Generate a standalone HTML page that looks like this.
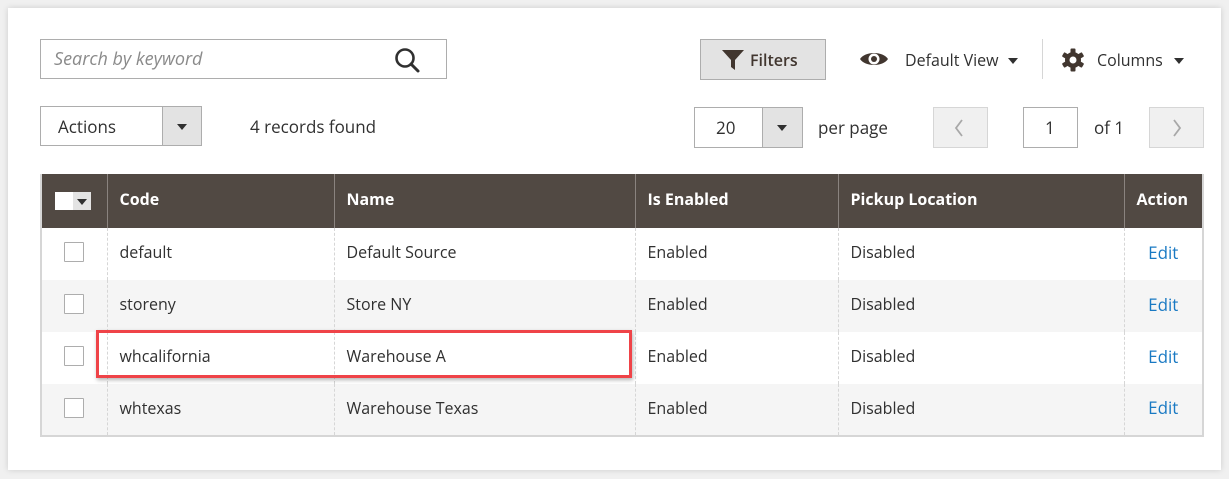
<!DOCTYPE html>
<html><head><meta charset="utf-8"><style>
*{box-sizing:border-box;margin:0;padding:0}
body{width:1229px;height:479px;background:#f0f0f0;font-family:"Open Sans","Liberation Sans",sans-serif;color:#303030;position:relative;overflow:hidden}
.card{position:absolute;left:8px;top:8px;width:1213px;height:462px;background:#fff;box-shadow:0 0 6px rgba(0,0,0,.15)}
.a{position:absolute}
.t{font-size:17px;line-height:20px}
.box{position:absolute;border:1px solid #adadad;background:#fff}
.tri{width:0;height:0;border-left:5px solid transparent;border-right:5px solid transparent;border-top:6px solid #303030;position:absolute}
table{position:absolute;left:40px;top:174px;width:1164px;border-collapse:collapse;border:2px solid #d6d6d6;border-top:none;font-size:16px}
th{background:#514943;color:#fff;text-align:left;font-weight:bold;height:54px;padding:0 12px 4px;border-left:1px solid #8a837f}
th:first-child{border-left:none}
td{height:52px;padding:0 12px 4px;border-left:1px dashed #d6d6d6;vertical-align:middle}
td:first-child{border-left:none}
tr.g td{background:#f5f5f5}
.cb{width:20px;height:20px;border:1px solid #adadad;background:#fff;margin-left:10px;border-radius:1px}
a{color:#1979c3;text-decoration:none;font-size:17px}
</style></head><body>
<div class="card"></div>
<div class="box" style="left:40px;top:39px;width:407px;height:40px"></div>
<div class="a t" style="left:54px;top:49px;font-style:italic;color:#8a8a8a;font-size:18px">Search by keyword</div>
<svg class="a" style="left:393px;top:46px" width="28" height="28" viewBox="0 0 28 28"><circle cx="12" cy="12" r="8.5" fill="none" stroke="#303030" stroke-width="2.6"/><line x1="18" y1="18" x2="25" y2="25" stroke="#303030" stroke-width="3" stroke-linecap="round"/></svg>

<div class="box" style="left:40px;top:106px;width:162px;height:40px"></div>
<div class="a" style="left:162px;top:107px;width:39px;height:38px;background:#e3e3e3;border-left:1px solid #adadad"></div>
<div class="tri" style="left:177px;top:124px"></div>
<div class="a t" style="left:58px;top:117px">Actions</div>
<div class="a t" style="left:250px;top:117px">4 records found</div>

<div class="a" style="left:700px;top:39px;width:126px;height:41px;background:#e3e3e3;border:1px solid #adadad"></div>
<svg class="a" style="left:721px;top:49px" width="24" height="22" viewBox="0 0 24 22"><path d="M1 1H23L14 11V21L10 18V11Z" fill="#41362f"/></svg>
<div class="a t" style="left:750px;top:50px;font-weight:600;color:#41362f;font-size:16px">Filters</div>
<svg class="a" style="left:859px;top:49px" width="30" height="20" viewBox="0 0 30 20"><path d="M1 10C6 2 24 2 29 10C24 18 6 18 1 10Z" fill="#41362f"/><circle cx="15" cy="10" r="5.5" fill="#fff"/><circle cx="15" cy="10" r="3" fill="#41362f"/></svg>
<div class="a t" style="left:905px;top:50px;font-size:16px">Default View</div>
<div class="tri" style="left:1008px;top:58px"></div>
<div class="a" style="left:1042px;top:39px;width:1px;height:40px;background:#d6d6d6"></div>
<svg class="a" style="left:1061px;top:48px" width="24" height="24" viewBox="0 0 24 24"><g fill="#41362f"><circle cx="12" cy="12" r="8"/><rect x="9.5" y="0.5" width="5" height="23" rx="1"/><rect x="9.5" y="0.5" width="5" height="23" rx="1" transform="rotate(60 12 12)"/><rect x="9.5" y="0.5" width="5" height="23" rx="1" transform="rotate(120 12 12)"/></g><circle cx="12" cy="12" r="3.5" fill="#fff"/></svg>
<div class="a t" style="left:1097px;top:50px;font-size:16px">Columns</div>
<div class="tri" style="left:1174px;top:58px"></div>

<div class="box" style="left:694px;top:107px;width:109px;height:41px"></div>
<div class="a" style="left:762px;top:108px;width:40px;height:39px;background:#e3e3e3;border-left:1px solid #adadad"></div>
<div class="tri" style="left:777px;top:125px"></div>
<div class="a t" style="left:716px;top:118px">20</div>
<div class="a t" style="left:818px;top:118px">per page</div>
<div class="a" style="left:933px;top:107px;width:55px;height:41px;background:#f0f0f0;border:1px solid #d6d6d6"></div>
<svg class="a" style="left:953px;top:118px" width="12" height="20" viewBox="0 0 12 20"><path d="M9 2L3 10L9 18" fill="none" stroke="#a8a8a8" stroke-width="1.8"/></svg>
<div class="box" style="left:1023px;top:107px;width:55px;height:41px"></div>
<div class="a t" style="left:1045px;top:118px">1</div>
<div class="a t" style="left:1094px;top:118px">of 1</div>
<div class="a" style="left:1149px;top:107px;width:55px;height:41px;background:#f0f0f0;border:1px solid #d6d6d6"></div>
<svg class="a" style="left:1171px;top:118px" width="12" height="20" viewBox="0 0 12 20"><path d="M3 2L9 10L3 18" fill="none" stroke="#a8a8a8" stroke-width="1.8"/></svg>

<table>
<tr><th style="width:66px;padding:0 13px"><div style="display:flex"><div style="width:18px;height:18px;background:#fff"></div><div style="width:18px;height:18px;background:#e3e3e3;position:relative"><div class="tri" style="left:4px;top:7px"></div></div></div></th><th style="width:227px">Code</th><th style="width:301px">Name</th><th style="width:203px">Is Enabled</th><th style="width:286px">Pickup Location</th><th>Action</th></tr>
<tr><td><div class="cb"></div></td><td>default</td><td>Default Source</td><td>Enabled</td><td>Disabled</td><td style="text-align:center"><a>Edit</a></td></tr>
<tr class="g"><td><div class="cb"></div></td><td>storeny</td><td>Store NY</td><td>Enabled</td><td>Disabled</td><td style="text-align:center"><a>Edit</a></td></tr>
<tr><td><div class="cb"></div></td><td>whcalifornia</td><td>Warehouse A</td><td>Enabled</td><td>Disabled</td><td style="text-align:center"><a>Edit</a></td></tr>
<tr class="g"><td><div class="cb"></div></td><td>whtexas</td><td>Warehouse Texas</td><td>Enabled</td><td>Disabled</td><td style="text-align:center"><a>Edit</a></td></tr>
</table>
<div class="a" style="left:96px;top:330px;width:536px;height:48px;border:3px solid #ef4348;box-shadow:1px 2px 4px rgba(0,0,0,.3)"></div>
</body></html>
